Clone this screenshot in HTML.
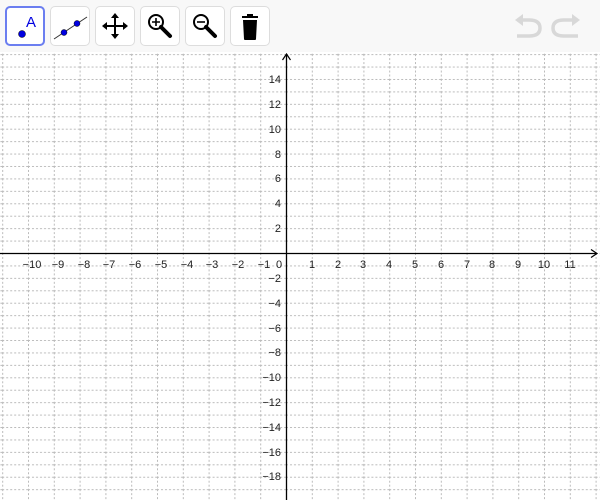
<!DOCTYPE html>
<html><head><style>
body{margin:0;width:600px;height:500px;overflow:hidden;background:#fff;font-family:"Liberation Sans",sans-serif}
.tb{position:absolute;left:0;top:0;width:600px;height:52px;background:#f8f8f8}
.btn{position:absolute;top:6px;width:38px;height:38px;border:1px solid #ddd;border-radius:5px;background:#fff;box-sizing:content-box}
.sel{border:2px solid #6b7ef0;width:36px;height:36px}
svg text{font-family:"Liberation Sans",sans-serif;font-size:11px;fill:#222}
</style></head><body>
<svg width="600" height="500" style="position:absolute;left:0;top:0">
<defs>
<pattern id="g" x="286" y="253" width="25.8" height="12.43" patternUnits="userSpaceOnUse">
<line x1="0.5" y1="0" x2="0.5" y2="12.43" stroke="#bbb" stroke-width="1" stroke-dasharray="2,2"/>
<line x1="0" y1="0.5" x2="25.8" y2="0.5" stroke="#bbb" stroke-width="1" stroke-dasharray="2,2"/>
</pattern>
</defs>
<rect x="0" y="53" width="600" height="447" fill="url(#g)"/>
<line x1="0" y1="253.5" x2="597" y2="253.5" stroke="#000" stroke-width="1.3"/>
<path d="M591 249.5 L597 253.5 L591 257.5" fill="none" stroke="#000" stroke-width="1.2"/>
<line x1="286.5" y1="54" x2="286.5" y2="500" stroke="#000" stroke-width="1.3"/>
<path d="M282.5 60 L286.5 54 L290.5 60" fill="none" stroke="#000" stroke-width="1.2"/>
<g text-anchor="middle">
<text x="32" y="268">−10</text><text x="58" y="268">−9</text><text x="84" y="268">−8</text><text x="109" y="268">−7</text><text x="135" y="268">−6</text><text x="161" y="268">−5</text><text x="187" y="268">−4</text><text x="212" y="268">−3</text><text x="238" y="268">−2</text><text x="264" y="268">−1</text><text x="279" y="268">0</text>
<text x="312" y="268">1</text><text x="338" y="268">2</text><text x="363" y="268">3</text><text x="389" y="268">4</text><text x="415" y="268">5</text><text x="441" y="268">6</text><text x="467" y="268">7</text><text x="492" y="268">8</text><text x="518" y="268">9</text><text x="544" y="268">10</text><text x="570" y="268">11</text>
</g>
<g text-anchor="end">
<text x="281" y="83">14</text><text x="281" y="108">12</text><text x="281" y="133">10</text><text x="281" y="158">8</text><text x="281" y="182">6</text><text x="281" y="207">4</text><text x="281" y="232">2</text>
<text x="281" y="282">−2</text><text x="281" y="307">−4</text><text x="281" y="332">−6</text><text x="281" y="356">−8</text><text x="281" y="381">−10</text><text x="281" y="406">−12</text><text x="281" y="431">−14</text><text x="281" y="456">−16</text><text x="281" y="480">−18</text>
</g>
</svg>
<div class="tb">
<div class="btn sel" style="left:5px"><svg width="36" height="36"><circle cx="15" cy="26" r="3.5" fill="#0000e0" stroke="#000" stroke-width=".5"/><text x="19" y="19" style="font-size:15px;fill:#0000e0">A</text></svg></div>
<div class="btn" style="left:50px"><svg width="38" height="38"><line x1="3" y1="32" x2="36" y2="10" stroke="#333"/><circle cx="13" cy="25.5" r="3" fill="#0000e0" stroke="#000" stroke-width=".5"/><circle cx="26" cy="16.5" r="3" fill="#0000e0" stroke="#000" stroke-width=".5"/></svg></div>
<div class="btn" style="left:95px"><svg width="38" height="38"><path d="M19 8 V30 M8 19 H30" stroke="#000" stroke-width="2"/><path d="M19 6 L15 11 H23Z M19 32 L15 27 H23Z M6 19 L11 15 V23Z M32 19 L27 15 V23Z" fill="#000"/></svg></div>
<div class="btn" style="left:140px"><svg width="38" height="38"><circle cx="15" cy="15" r="7" fill="none" stroke="#000" stroke-width="2"/><path d="M20 20 L29 29" stroke="#000" stroke-width="4" stroke-linecap="round"/><path d="M11 15 H19 M15 11 V19" stroke="#000" stroke-width="1.6"/></svg></div>
<div class="btn" style="left:185px"><svg width="38" height="38"><circle cx="15" cy="15" r="7" fill="none" stroke="#000" stroke-width="2"/><path d="M20 20 L29 29" stroke="#000" stroke-width="4" stroke-linecap="round"/><path d="M11 15 H19" stroke="#000" stroke-width="1.6"/></svg></div>
<div class="btn" style="left:230px"><svg width="38" height="38"><path d="M11 9 H27 V11 H11Z M16 7 H22 V9 H16Z" fill="#000"/><path d="M12 13 H26 L25 32 Q25 33 24 33 H14 Q13 33 13 32Z" fill="#000"/></svg></div>
<svg width="100" height="50" style="position:absolute;left:500px;top:0">
<path d="M18 20 H29 Q40 20 40 28 Q40 36 29 36 H17" fill="none" stroke="#d8d8d8" stroke-width="3.5"/><path d="M15 20 L23 14 V26Z" fill="#d8d8d8"/>
<path d="M75 20 H64 Q53 20 53 28 Q53 36 64 36 H78" fill="none" stroke="#d8d8d8" stroke-width="3.5"/><path d="M80 20 L72 14 V26Z" fill="#d8d8d8"/>
</svg>
</div>
</body></html>
